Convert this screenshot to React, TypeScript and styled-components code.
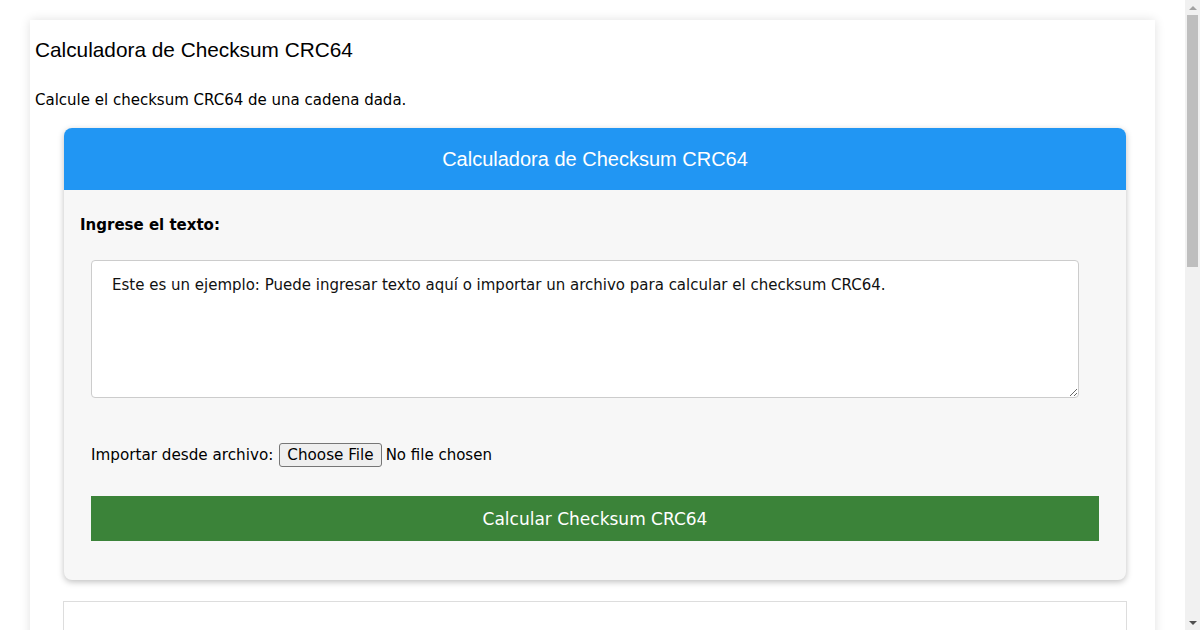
import styled, { createGlobalStyle } from 'styled-components'

const GlobalStyle = createGlobalStyle`
  html, body {
    margin: 0;
    padding: 0;
    background: #fff;
    overflow: hidden;
  }

  body {
    font-family: "DejaVu Sans", Verdana, sans-serif;
    font-size: 15px;
    color: #111;
  }
`

const Frame = styled.div`
  display: flex;
  height: 100vh;
`

const Main = styled.div`
  flex: 1;
  min-width: 0;
  overflow: hidden;
`

// drawn browser scrollbar on the right edge
const ScrollRail = styled.div`
  width: 15px;
  flex-shrink: 0;
  display: flex;
  flex-direction: column;
  align-items: center;
  background: #f1f1f1;
`

const Arrow = styled.div<{ $down?: boolean }>`
  height: 15px;
  display: flex;
  align-items: center;
  justify-content: center;

  &::after {
    content: '';
    border-left: 4px solid transparent;
    border-right: 4px solid transparent;
    ${(p) =>
      p.$down
        ? 'border-top: 4px solid #505050;'
        : 'border-bottom: 4px solid #a3a3a3;'}
  }
`

const Thumb = styled.div`
  width: 11px;
  height: 252px;
  background: #bebebe;
`

const Track = styled.div`
  flex: 1;
`

const Page = styled.div`
  width: 1125px;
  margin: 20px auto 0;
  padding: 5px 5px 40px;
  box-sizing: border-box;
  background: #fff;
  box-shadow: 0 0 10px rgba(0, 0, 0, 0.12);
`

const Title = styled.h1`
  margin: 11px 0 0;
  font-family: "Liberation Sans", Arial, sans-serif;
  font-size: 20.8px;
  font-weight: normal;
  line-height: 28px;
  color: #000;
`

const Intro = styled.p`
  margin: 25px 0 0;
  line-height: 22px;
  color: #000;
`

const Card = styled.section`
  width: 1062px;
  margin: 17px 0 0 29px;
  border-radius: 8px;
  overflow: hidden;
  background: #f7f7f7;
  box-shadow: 0 2px 6px rgba(0, 0, 0, 0.25);
`

const CardHeader = styled.header`
  height: 62px;
  display: flex;
  align-items: center;
  justify-content: center;
  background: #2196f3;
  color: #fff;
  font-family: "Liberation Sans", Arial, sans-serif;
  font-size: 20px;
`

const CardBody = styled.div`
  padding: 24px 16px 39px;
`

const Label = styled.label`
  display: block;
  font-weight: bold;
  line-height: 22px;
  color: #000;
`

const Form = styled.div`
  padding: 0 11px;
  display: flex;
  flex-direction: column;
`

const TextArea = styled.textarea`
  width: 988px;
  height: 138px;
  margin-top: 24px;
  padding: 13px 20px;
  box-sizing: border-box;
  border: 1px solid #ccc;
  border-radius: 4px;
  background: #fff;
  font-family: "DejaVu Sans", Verdana, sans-serif;
  font-size: 15px;
  line-height: 22px;
  color: #111;
  resize: vertical;
`

const FileRow = styled.div`
  margin-top: 45px;
  display: flex;
  align-items: center;
  gap: 6px;
  line-height: 24px;
  color: #000;
  font-size: 15.2px;

  input {
    font-family: "DejaVu Sans", Verdana, sans-serif;
    font-size: 15px;
  }

  input::file-selector-button {
    height: 24px;
    margin-right: 4px;
    padding: 0 7px;
    border: 1px solid #767676;
    border-radius: 3px;
    background: #efefef;
    color: #000;
    font-family: "DejaVu Sans", Verdana, sans-serif;
    font-size: 15.2px;
  }
`

const SubmitButton = styled.button`
  width: 100%;
  height: 45px;
  margin-top: 29px;
  border: none;
  background: #3b8339;
  color: #fff;
  font-family: "DejaVu Sans", Verdana, sans-serif;
  font-size: 17px;
  cursor: pointer;
`

const ResultCard = styled.section`
  width: 1062px;
  height: 200px;
  margin: 21px 0 0 28px;
  border: 1px solid #ddd;
  background: #fff;
`

export default function App() {
  return (
    <>
      <GlobalStyle />
      <Frame>
        <Main>
          <Page>
            <Title>Calculadora de Checksum CRC64</Title>
            <Intro>Calcule el checksum CRC64 de una cadena dada.</Intro>
            <Card>
              <CardHeader>Calculadora de Checksum CRC64</CardHeader>
              <CardBody>
                <Label htmlFor="input-text">Ingrese el texto:</Label>
                <Form>
                  <TextArea
                    id="input-text"
                    defaultValue="Este es un ejemplo: Puede ingresar texto aquí o importar un archivo para calcular el checksum CRC64."
                  />
                  <FileRow>
                    <span>Importar desde archivo:</span>
                    <input type="file" />
                  </FileRow>
                  <SubmitButton>Calcular Checksum CRC64</SubmitButton>
                </Form>
              </CardBody>
            </Card>
            <ResultCard />
          </Page>
        </Main>
        <ScrollRail>
          <Arrow />
          <Thumb />
          <Track />
          <Arrow $down />
        </ScrollRail>
      </Frame>
    </>
  )
}
